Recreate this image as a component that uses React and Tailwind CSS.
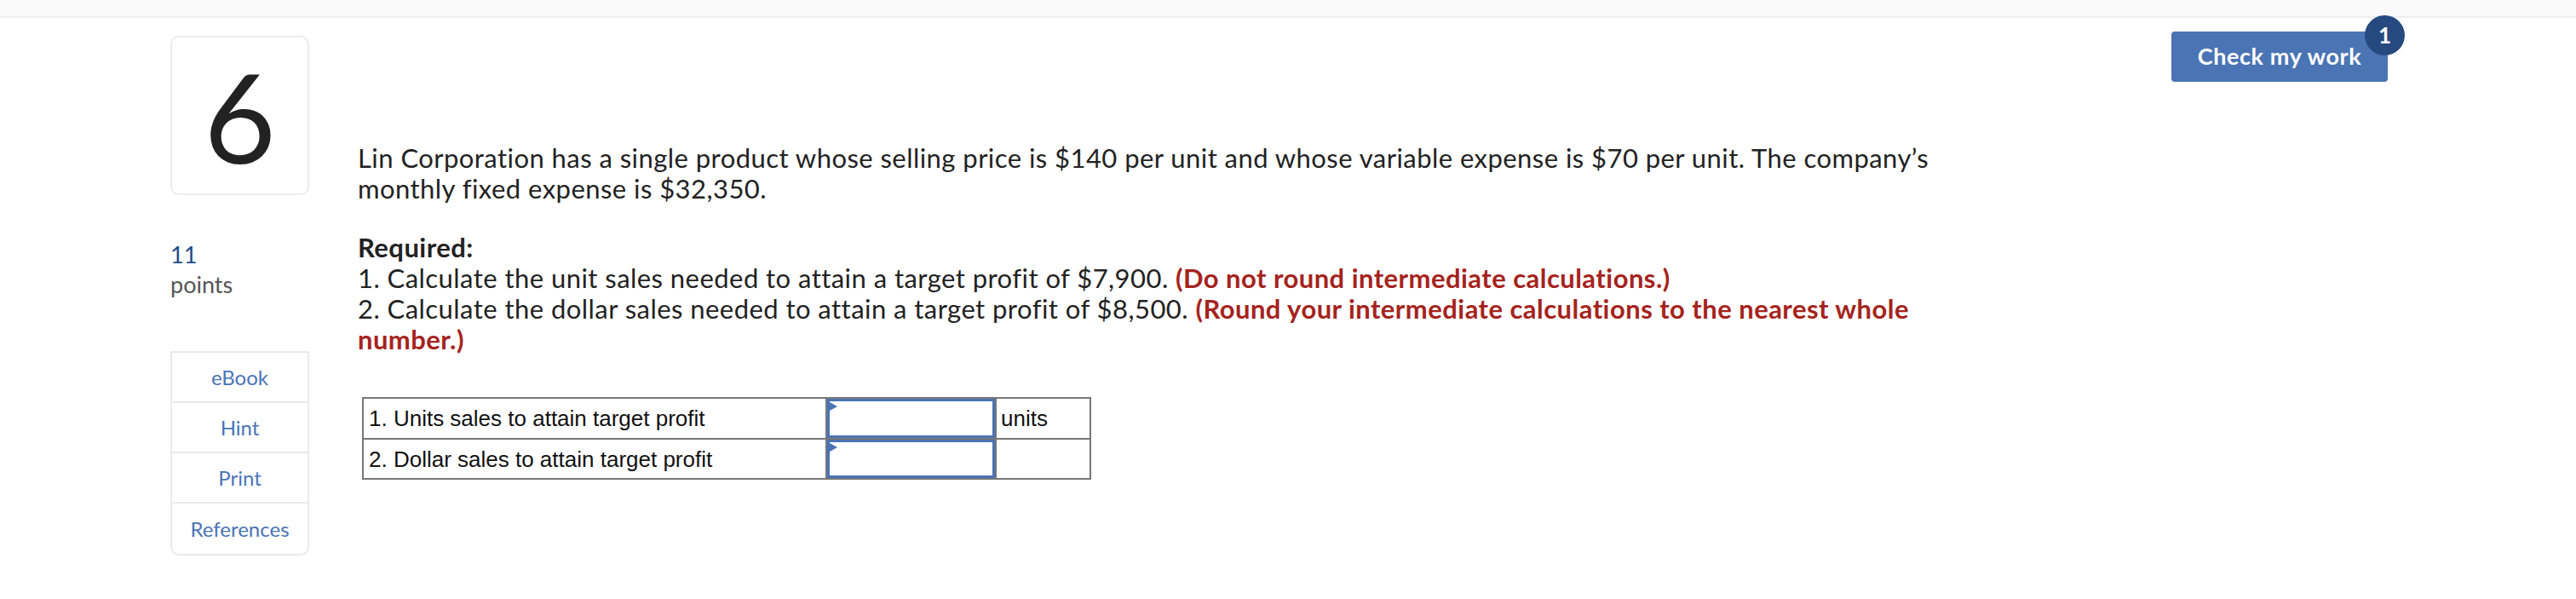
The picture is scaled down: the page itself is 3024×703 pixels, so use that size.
import React from 'react';

const sideLinks = ['eBook', 'Hint', 'Print', 'References'];

const rows = [
    { label: '1. Units sales to attain target profit', unit: 'units', h: 'h-[48px]', ih: 'h-[46px]' },
    { label: '2. Dollar sales to attain target profit', unit: '', h: 'h-[47px]', ih: 'h-[45px]' },
];

const AnswerInput = ({ h }) => (
    <div className={`relative w-full border-[3px] border-[#4a73b5] bg-white ${h}`}>
        <span className="absolute left-0 top-[1px] h-0 w-0 border-y-[5px] border-l-[9px] border-y-transparent border-l-[#4a73b5]" />
    </div>
);

const App = () => {
    return (
        <div className="min-h-screen w-full bg-white font-['Lato',sans-serif] text-[#222] [font-variant-ligatures:none]">
            <div className="h-[21px] border-b-2 border-[#eeeeee] bg-[#fafafa]" />

            <div className="flex pl-[200px] pr-[221px]">
                {/* left rail */}
                <div className="w-[163px] shrink-0">
                    <div className="mt-[21px] flex h-[187px] items-center justify-center rounded-[10px] border-2 border-[#ececec]">
                        <span className="text-[146px] leading-none">6</span>
                    </div>
                    <div className="mt-[52px] text-[27px] leading-[35px]">
                        <div className="text-[#1d4a8a]">11</div>
                        <div className="text-[#555]">points</div>
                    </div>
                    <div className="mt-[61px] rounded-b-[10px] border-2 border-[#eaeaea]">
                        {sideLinks.map((l, i) => (
                            <div
                                key={l}
                                className={`flex h-[59px] items-center justify-center text-[24px] text-[#4a74b8] ${i < sideLinks.length - 1 ? 'border-b-2 border-[#eaeaea]' : ''}`}
                            >
                                {l}
                            </div>
                        ))}
                    </div>
                </div>

                {/* question */}
                <div className="ml-[57px] flex-1 pt-[146px] text-[31px] leading-[36px] tracking-[0.45px]">
                    <p>
                        Lin Corporation has a single product whose selling price is $140 per unit and whose variable expense is $70 per unit. The company’s
                        <br />
                        monthly fixed expense is $32,350.
                    </p>
                    <p className="mt-[33px]">
                        <span className="font-bold">Required:</span>
                        <br />
                        1. Calculate the unit sales needed to attain a target profit of $7,900.{' '}
                        <span className="font-bold text-[#a5231d]">(Do not round intermediate calculations.)</span>
                        <br />
                        2. Calculate the dollar sales needed to attain a target profit of $8,500.{' '}
                        <span className="font-bold text-[#a5231d]">
                            (Round your intermediate calculations to the nearest whole
                            <br />
                            number.)
                        </span>
                    </p>

                    <table className="ml-[5px] mt-[50px] w-[854px] table-fixed border-collapse font-['Liberation_Sans',Arial,sans-serif] text-[26px] tracking-normal text-[#111]">
                        <colgroup>
                            <col className="w-[544px]" />
                            <col className="w-[199px]" />
                            <col className="w-[111px]" />
                        </colgroup>
                        <tbody>
                            {rows.map((r) => (
                                <tr key={r.label} className={r.h}>
                                    <td className="border-2 border-[#777] px-[6px] align-middle leading-none">{r.label}</td>
                                    <td className="border-2 border-[#777] p-0 align-top">
                                        <AnswerInput h={r.ih} />
                                    </td>
                                    <td className="border-2 border-[#777] px-[5px] align-middle leading-none">{r.unit}</td>
                                </tr>
                            ))}
                        </tbody>
                    </table>
                </div>

                {/* check button */}
                <div className="shrink-0">
                    <button className="relative mt-[16px] h-[59px] w-[254px] rounded-[4px] bg-[#4a74b4] text-[27px] font-bold tracking-[0.6px] text-white">
                        Check my work
                        <span className="absolute -right-[20px] -top-[19px] flex h-[47px] w-[47px] items-center justify-center rounded-full bg-[#264a80] text-[26px] font-bold tracking-normal">
                            1
                        </span>
                    </button>
                </div>
            </div>
        </div>
    );
};

export default App;
